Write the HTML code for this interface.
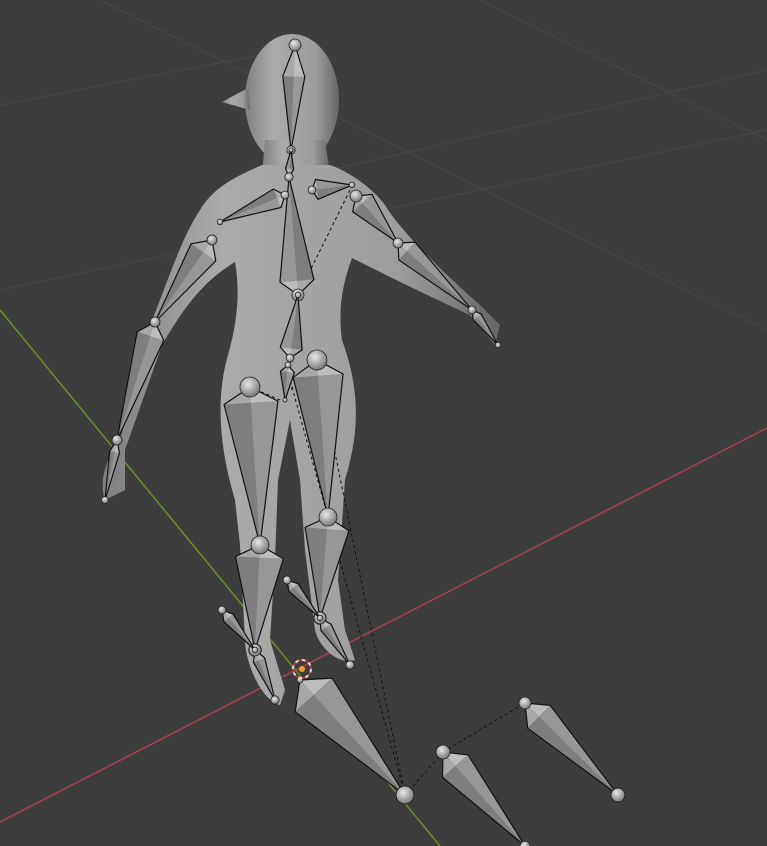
<!DOCTYPE html>
<html><head><meta charset="utf-8"><style>
html,body{margin:0;padding:0;background:#3d3d3d;width:767px;height:846px;overflow:hidden}
svg{display:block}
</style></head><body>
<svg id="s" width="767" height="846" viewBox="0 0 767 846" xmlns="http://www.w3.org/2000/svg">
<defs>
<radialGradient id="sph" cx="40%" cy="35%" r="65%"><stop offset="0" stop-color="#e8e8e8"/><stop offset="1" stop-color="#7a7a7a"/></radialGradient>
<linearGradient id="bodyg" x1="0" y1="0" x2="1" y2="0"><stop offset="0" stop-color="#7f7f7f"/><stop offset="0.3" stop-color="#ababab"/><stop offset="0.75" stop-color="#9c9c9c"/><stop offset="1" stop-color="#666"/></linearGradient>
</defs>
<rect width="767" height="846" fill="#3d3d3d"/>
<g stroke="#494949" stroke-width="1" fill="none">
<line x1="0" y1="105" x2="260" y2="55"/>
<line x1="100" y1="0" x2="767" y2="330"/>
<line x1="480" y1="0" x2="767" y2="140"/>
<line x1="330" y1="170" x2="767" y2="70"/>
<line x1="0" y1="290" x2="767" y2="130" />
</g>
<line x1="0" y1="310" x2="440" y2="846" stroke="#6b8e23" stroke-width="1.5"/>
<line x1="0" y1="822" x2="767" y2="428" stroke="#a8404f" stroke-width="1.5"/>
<g fill="url(#bodyg)" stroke="none">
<ellipse cx="292" cy="100" rx="47" ry="66"/>
<path d="M222,102 L248,88 L250,110 Z"/>
<path d="M265,140 L325,140 L330,175 L262,175 Z"/>
<path d="M262,165 C240,175 215,185 200,210 C180,240 165,290 150,325 L120,440 C108,455 98,480 105,500 L125,490 L125,450 L162,345 C185,305 205,280 235,262 C240,290 238,320 228,355 C215,400 220,450 235,500 L240,545 L245,640 C245,660 260,700 280,705 L285,690 L270,640 L275,560 L278,480 L290,420 L300,480 L305,550 L315,630 C320,650 340,665 355,660 L345,630 L338,580 L345,480 C360,430 360,390 342,340 C338,310 342,285 352,258 C380,272 420,292 470,315 L495,345 L500,325 L480,305 C440,270 400,230 385,205 C370,185 345,170 330,165 Z"/>
</g>
<g id="bones"></g>
</svg>
<script>
var g=document.getElementById('bones');
function el(t,a){var e=document.createElementNS('http://www.w3.org/2000/svg',t);for(var k in a)e.setAttribute(k,a[k]);g.appendChild(e);return e;}
function bone(ax,ay,bx,by,w,f,r){
 var dx=bx-ax,dy=by-ay,L=Math.sqrt(dx*dx+dy*dy),nx=-dy/L,ny=dx/L;
 var mx=ax+dx*f,my=ay+dy*f;
 var p1=[mx+nx*w,my+ny*w],p2=[mx-nx*w,my-ny*w];
 el('polygon',{points:ax+','+ay+' '+p1+' '+mx+','+my,fill:'#a8a8a8'});
 el('polygon',{points:ax+','+ay+' '+p2+' '+mx+','+my,fill:'#bdbdbd'});
 el('polygon',{points:mx+','+my+' '+p1+' '+bx+','+by,fill:'#7e7e7e'});
 el('polygon',{points:mx+','+my+' '+p2+' '+bx+','+by,fill:'#979797'});
 el('polygon',{points:ax+','+ay+' '+p1+' '+bx+','+by+' '+p2,fill:'none',stroke:'#111',"stroke-width":1.2});
 el('circle',{cx:ax,cy:ay,r:r||4,fill:'url(#sph)',stroke:'#222',"stroke-width":0.8});
 el('circle',{cx:bx,cy:by,r:(r||4)*0.7,fill:'url(#sph)',stroke:'#222',"stroke-width":0.8});
}
function dash(a,b,c,d){el('line',{x1:a,y1:b,x2:c,y2:d,stroke:'#111',"stroke-width":1,"stroke-dasharray":"3,3"});}
dash(405,795,290,380);dash(405,795,317,365);dash(405,795,300,690);dash(405,795,443,752);dash(443,752,525,703);dash(298,295,350,190);dash(250,387,280,400);dash(317,360,290,390);
bone(295,45,291,150,11,0.3,6);
bone(289,177,291,150,4,0.3,3);
bone(298,295,289,177,17,0.12,6);
bone(290,358,298,295,11,0.15,4);
bone(285,195,220,222,10,0.12,4);
bone(212,240,155,322,15,0.15,5);
bone(155,322,117,440,14,0.12,5);
bone(117,440,105,500,5,0.2,5);
bone(312,190,352,185,10,0.12,4);
bone(356,196,398,243,13,0.15,6);
bone(398,243,472,310,12,0.12,5);
bone(472,310,498,345,5,0.2,4);
bone(288,365,285,400,7,0.2,3);
bone(250,387,260,545,27,0.1,10);
bone(317,360,328,517,25,0.1,10);
bone(260,545,255,650,24,0.12,9);
bone(328,517,320,618,22,0.12,9);
bone(255,650,275,700,6,0.2,6);
bone(320,618,350,665,6,0.2,6);
bone(222,610,255,650,6,0.2,4);
bone(287,580,320,618,6,0.2,4);
bone(300,680,405,795,25,0.13,3);
bone(443,752,525,846,17,0.15,7);
bone(525,703,618,795,16,0.15,6);
el('circle',{cx:405,cy:795,r:9,fill:'url(#sph)',stroke:'#222'});
el('circle',{cx:618,cy:795,r:7,fill:'url(#sph)',stroke:'#222'});
el('circle',{cx:302,cy:669,r:9,fill:'none',stroke:'#ddd',"stroke-width":2,"stroke-dasharray":"4,3"});
el('circle',{cx:302,cy:669,r:9,fill:'none',stroke:'#c03030',"stroke-width":2,"stroke-dasharray":"3,4","stroke-dashoffset":"3.5"});
el('circle',{cx:302,cy:669,r:3,fill:'#f0a020'});
</script>
</body></html>
